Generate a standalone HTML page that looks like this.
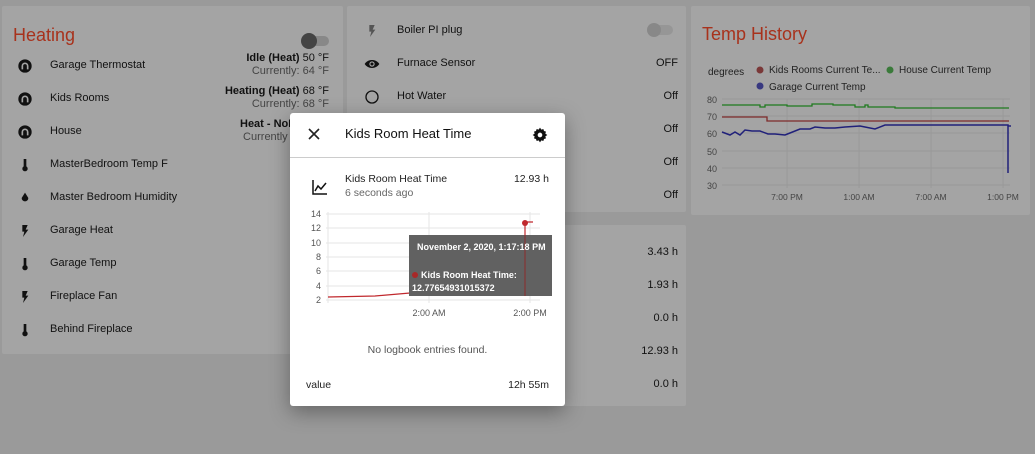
<!DOCTYPE html>
<html><head><meta charset="utf-8"><style>
*{margin:0;padding:0;box-sizing:border-box}
body{width:1035px;height:454px;background:#9a9a9a;font-family:"Liberation Sans",sans-serif;position:relative;overflow:hidden;color:#111}
.card{position:absolute;background:#a4a4a4;border-radius:2px}
.title{position:absolute;color:#a8321c;font-size:18px}
.row{position:absolute;left:0;right:0;height:20px;font-size:11px}
.row .ic{position:absolute;left:17px;top:2px;width:16px;height:16px}
.row .nm{position:absolute;left:50px;top:3px}
.row .st{position:absolute;right:8px;top:3px;text-align:right}
.sub{color:#444}
.modal{position:absolute;left:290px;top:113px;width:275px;height:293px;background:#fff;border-radius:3px;box-shadow:0 6px 20px rgba(0,0,0,.35)}
.ax{font-size:9px;fill:#555}
</style></head><body>

<div class="card" style="left:2px;top:6px;width:341px;height:348px">
<div class="title" style="left:11px;top:19px">Heating</div>
<div style="position:absolute;left:303px;top:30px;width:24px;height:10px;border-radius:5px;background:#888"></div>
<div style="position:absolute;left:299px;top:27px;width:16px;height:16px;border-radius:8px;background:#444"></div>
</div>
<div class="row" style="top:56px">
 <svg class="ic" viewBox="0 0 24 24"><circle cx="12" cy="12" r="10" fill="#111"/><path d="M8 17v-5a4 4 0 0 1 8 0v5" stroke="#a4a4a4" stroke-width="2.5" fill="none"/></svg>
 <span class="nm">Garage Thermostat</span>
 <span class="st" style="right:706px;top:-4px;line-height:13px"><b>Idle (Heat)</b> 50 °F<br><span class="sub">Currently: 64 °F</span></span>
</div>
<div class="row" style="top:89px">
 <svg class="ic" viewBox="0 0 24 24"><circle cx="12" cy="12" r="10" fill="#111"/><path d="M8 17v-5a4 4 0 0 1 8 0v5" stroke="#a4a4a4" stroke-width="2.5" fill="none"/></svg>
 <span class="nm">Kids Rooms</span>
 <span class="st" style="right:706px;top:-4px;line-height:13px"><b>Heating (Heat)</b> 68 °F<br><span class="sub">Currently: 68 °F</span></span>
</div>
<div class="row" style="top:122px">
 <svg class="ic" viewBox="0 0 24 24"><circle cx="12" cy="12" r="10" fill="#111"/><path d="M8 17v-5a4 4 0 0 1 8 0v5" stroke="#a4a4a4" stroke-width="2.5" fill="none"/></svg>
 <span class="nm">House</span>
 <span class="st" style="left:240px;right:auto;top:-4px;line-height:13px;text-align:left"><b>Heat - NoHold</b><br><span class="sub">&nbsp;Currently</span></span>
</div>
<div class="row" style="top:155px"><svg class="ic" viewBox="0 0 24 24"><path d="M10 3h4v11a4 4 0 1 1-4 0z" fill="#111"/></svg><span class="nm">MasterBedroom Temp F</span></div>
<div class="row" style="top:188px"><svg class="ic" viewBox="0 0 24 24"><path d="M12 4l5 8a5 5 0 1 1-10 0z" fill="#111"/></svg><span class="nm">Master Bedroom Humidity</span></div>
<div class="row" style="top:221px"><svg class="ic" viewBox="0 0 24 24"><path d="M8 3h8l-3 7h4l-8 11 2-8H8z" fill="#111"/></svg><span class="nm">Garage Heat</span></div>
<div class="row" style="top:254px"><svg class="ic" viewBox="0 0 24 24"><path d="M10 3h4v11a4 4 0 1 1-4 0z" fill="#111"/></svg><span class="nm">Garage Temp</span></div>
<div class="row" style="top:287px"><svg class="ic" viewBox="0 0 24 24"><path d="M8 3h8l-3 7h4l-8 11 2-8H8z" fill="#111"/></svg><span class="nm">Fireplace Fan</span></div>
<div class="row" style="top:320px"><svg class="ic" viewBox="0 0 24 24"><path d="M10 3h4v11a4 4 0 1 1-4 0z" fill="#111"/></svg><span class="nm">Behind Fireplace</span></div>

<div class="card" style="left:347px;top:6px;width:339px;height:206px"></div>
<div class="card" style="left:347px;top:225px;width:339px;height:181px"></div>
<div style="position:absolute;left:347px;top:0;width:339px;height:454px">
<div class="row" style="top:21px"><svg class="ic" viewBox="0 0 24 24"><path d="M8 3h8l-3 7h4l-8 11 2-8H8z" fill="#555"/></svg><span class="nm">Boiler PI plug</span>
 <div style="position:absolute;left:304px;top:4px;width:22px;height:10px;border-radius:5px;background:#969696"></div>
 <div style="position:absolute;left:300px;top:2px;width:14px;height:14px;border-radius:7px;background:#888"></div></div>
<div class="row" style="top:54px"><svg class="ic" viewBox="0 0 24 24"><path d="M1 12c5-8 17-8 22 0-5 8-17 8-22 0z" fill="#111"/><circle cx="12" cy="12" r="4" fill="#a4a4a4"/><circle cx="12" cy="12" r="2.3" fill="#111"/></svg><span class="nm">Furnace Sensor</span><span class="st">OFF</span></div>
<div class="row" style="top:87px"><svg class="ic" viewBox="0 0 24 24"><circle cx="12" cy="12" r="9" fill="none" stroke="#111" stroke-width="2"/></svg><span class="nm">Hot Water</span><span class="st">Off</span></div>
<div class="row" style="top:120px"><span class="st">Off</span></div>
<div class="row" style="top:153px"><span class="st">Off</span></div>
<div class="row" style="top:186px"><span class="st">Off</span></div>
<div class="row" style="top:243px"><span class="st">3.43 h</span></div>
<div class="row" style="top:276px"><span class="st">1.93 h</span></div>
<div class="row" style="top:309px"><span class="st">0.0 h</span></div>
<div class="row" style="top:342px"><span class="st">12.93 h</span></div>
<div class="row" style="top:375px"><span class="st">0.0 h</span></div>
</div>

<div class="card" style="left:691px;top:6px;width:339px;height:209px">
<div class="title" style="left:11px;top:18px">Temp History</div>
</div>
<svg style="position:absolute;left:690px;top:55px" width="345" height="155">
<g font-size="10" fill="#222"><text x="18" y="20">degrees</text>
<circle cx="70" cy="15" r="3.5" fill="#7a3838"/><text x="79" y="18">Kids Rooms Current Te...</text>
<circle cx="200" cy="15" r="3.5" fill="#3a7a3a"/><text x="209" y="18">House Current Temp</text>
<circle cx="70" cy="31" r="3.5" fill="#383880"/><text x="79" y="35">Garage Current Temp</text></g>
<g stroke="#969696" stroke-width="0.7"><line x1="32" y1="44" x2="320" y2="44"/><line x1="32" y1="61" x2="320" y2="61"/><line x1="32" y1="78" x2="320" y2="78"/><line x1="32" y1="96" x2="320" y2="96"/><line x1="32" y1="113" x2="320" y2="113"/><line x1="32" y1="130" x2="320" y2="130"/>
<line x1="97" y1="44" x2="97" y2="133"/><line x1="169" y1="44" x2="169" y2="133"/><line x1="241" y1="44" x2="241" y2="133"/><line x1="313" y1="44" x2="313" y2="133"/></g>
<g font-size="9" fill="#444" text-anchor="end"><text x="27" y="48">80</text><text x="27" y="65">70</text><text x="27" y="82">60</text><text x="27" y="100">50</text><text x="27" y="117">40</text><text x="27" y="134">30</text></g>
<g font-size="8.5" fill="#444" text-anchor="middle"><text x="97" y="145">7:00 PM</text><text x="169" y="145">1:00 AM</text><text x="241" y="145">7:00 AM</text><text x="313" y="145">1:00 PM</text></g>
<path d="M32 50H70V52H75V50H97V51H122V49H143V50H165V52H175V50H178V52H205V53H319" stroke="#1f7a1f" stroke-width="1.3" fill="none"/>
<path d="M32 62H77V66H319" stroke="#7e2a2a" stroke-width="1.3" fill="none"/>
<path d="M32 77L40 80 45 77 50 80 55 75 62 76 70 76 78 79 85 79 95 80 100 78 110 74 120 74 125 72 135 73 145 73 155 72 170 71 175 72 185 74 195 70 200 70H318V118M318 71H321" stroke="#20207a" stroke-width="1.5" fill="none"/>
</svg>

<div class="modal">
 <svg style="position:absolute;left:18px;top:15px" width="12" height="12"><path d="M1 1L11 11M11 1L1 11" stroke="#222" stroke-width="1.6"/></svg>
 <div style="position:absolute;left:55px;top:13px;font-size:13px;color:#111">Kids Room Heat Time</div>
 <svg style="position:absolute;left:242px;top:14px" width="16" height="16" viewBox="0 0 24 24"><path d="M12 1l2 3 3-1 1 3 3 1-1 3 3 2-3 2 1 3-3 1-1 3-3-1-2 3-2-3-3 1-1-3-3-1 1-3-3-2 3-2-1-3 3-1 1-3 3 1z" fill="#111"/><circle cx="12" cy="12" r="3.5" fill="#fff"/></svg>
 <div style="position:absolute;left:0;right:0;top:44px;border-top:1px solid #ccc"></div>
 <svg style="position:absolute;left:22px;top:66px" width="16" height="16" viewBox="0 0 16 16"><path d="M1 1V15H15M3 12L6 7 9 10 14 4" stroke="#111" stroke-width="1.5" fill="none"/></svg>
 <div style="position:absolute;left:55px;top:60px;font-size:10.5px;color:#222">Kids Room Heat Time</div>
 <div style="position:absolute;left:55px;top:74px;font-size:10.5px;color:#666">6 seconds ago</div>
 <div style="position:absolute;right:16px;top:60px;font-size:10.5px;color:#222">12.93 h</div>
 <svg style="position:absolute;left:0;top:90px" width="275" height="125">
  <g stroke="#e6e6e6" stroke-width="1"><line x1="36" y1="11" x2="250" y2="11"/><line x1="36" y1="25" x2="250" y2="25"/><line x1="36" y1="40" x2="250" y2="40"/><line x1="36" y1="54" x2="250" y2="54"/><line x1="36" y1="68" x2="250" y2="68"/><line x1="36" y1="83" x2="250" y2="83"/><line x1="36" y1="97" x2="250" y2="97"/><line x1="38" y1="9" x2="38" y2="100"/><line x1="139" y1="9" x2="139" y2="100"/><line x1="240" y1="9" x2="240" y2="100"/></g>
  <g class="ax" text-anchor="end"><text x="31" y="14">14</text><text x="31" y="28">12</text><text x="31" y="43">10</text><text x="31" y="57">8</text><text x="31" y="71">6</text><text x="31" y="86">4</text><text x="31" y="100">2</text></g>
  <g class="ax" text-anchor="middle"><text x="139" y="113">2:00 AM</text><text x="240" y="113">2:00 PM</text></g>
  <path d="M38 94L85 93 120 90 235 87V19H243" stroke="#c0282d" stroke-width="1.2" fill="none"/>
  <circle cx="235" cy="20" r="3" fill="#c0282d"/>
  <rect x="119" y="32" width="143" height="61" fill="#616161"/>
  <line x1="235" y1="32" x2="235" y2="93" stroke="#8a2a2a" stroke-width="1"/>
  <text x="127" y="47" font-size="9" font-weight="bold" fill="#fff">November 2, 2020, 1:17:18 PM</text>
  <circle cx="125" cy="72" r="3" fill="#a82828"/>
  <text x="131" y="75" font-size="9" font-weight="bold" fill="#fff">Kids Room Heat Time:</text>
  <text x="122" y="88" font-size="9" font-weight="bold" fill="#fff">12.77654931015372</text>
 </svg>
 <div style="position:absolute;left:0;right:0;top:231px;text-align:center;font-size:10.5px;color:#555">No logbook entries found.</div>
 <div style="position:absolute;left:16px;top:266px;font-size:10.5px;color:#222">value</div>
 <div style="position:absolute;right:16px;top:266px;font-size:10.5px;color:#222">12h 55m</div>
</div>
</body></html>
